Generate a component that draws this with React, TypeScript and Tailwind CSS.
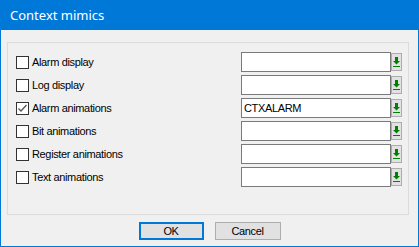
import React from "react";

const rows = [
  { label: "Alarm display", checked: false, value: "" },
  { label: "Log display", checked: false, value: "" },
  { label: "Alarm animations", checked: true, value: "CTXALARM" },
  { label: "Bit animations", checked: false, value: "" },
  { label: "Register animations", checked: false, value: "" },
  { label: "Text animations", checked: false, value: "" },
];

function ArrowIcon() {
  return (
    <svg width="7" height="10" viewBox="0 0 7 10" className="block">
      <rect x="2" y="0" width="3" height="4" fill="#008000" />
      <polygon points="0,4 7,4 3.5,7.5" fill="#008000" />
      <rect x="0" y="9" width="7" height="1" fill="#008000" />
    </svg>
  );
}

export default function App() {
  const font = { fontFamily: '"Liberation Sans", Arial, sans-serif' };
  return (
    <div
      className="w-[419px] h-[247px] bg-[#f0f0f0] border border-[#0078d7] flex flex-col text-[11px] tracking-[-0.35px] text-black"
      style={font}
    >
      <div
        className="h-[29px] shrink-0 bg-[#0078d7] pl-[9px] flex items-center text-white text-[13px] tracking-normal"
        style={{ fontFamily: '"Noto Sans", "Open Sans", sans-serif' }}
      >
        Context mimics
      </div>
      <div className="pl-[6px] pt-[12px]">
        <div className="w-[402px] h-[173px] border border-[#dcdcdc] pl-[8px] pt-[9px] flex flex-col gap-[3px]">
          {rows.map((r) => (
            <div key={r.label} className="h-[20px] flex items-center">
              <div className="w-[225px] flex items-center gap-[3px]">
                <div className="w-[13px] h-[13px] border border-[#333333] bg-white flex items-center justify-center">
                  {r.checked && (
                    <svg width="11" height="11" viewBox="0 0 11 11">
                      <polyline
                        points="1.5,5.5 4,8 9.5,2"
                        fill="none"
                        stroke="#555555"
                        strokeWidth="1.3"
                      />
                    </svg>
                  )}
                </div>
                <span className="leading-none">{r.label}</span>
              </div>
              <div className="w-[150px] h-[20px] border border-[#7a7a7a] bg-white flex items-center pl-[2px] leading-none">
                {r.value}
              </div>
              <div className="w-[11px] h-[18px] border border-[#adadad] bg-[#e1e1e1] flex items-center justify-center">
                <ArrowIcon />
              </div>
            </div>
          ))}
        </div>
      </div>
      <div className="flex justify-center gap-[11px] pt-[7px]">
        <button className="w-[65px] h-[18px] border-2 border-[#0078d7] bg-[#e1e1e1] flex items-center justify-center leading-none">
          OK
        </button>
        <button className="w-[66px] h-[18px] border border-[#adadad] bg-[#e1e1e1] flex items-center justify-center leading-none">
          Cancel
        </button>
      </div>
    </div>
  );
}
